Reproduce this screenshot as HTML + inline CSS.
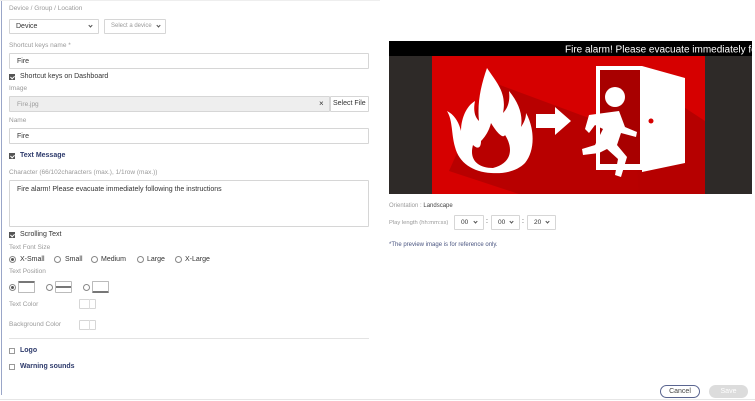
<!DOCTYPE html>
<html><head><meta charset="utf-8"><style>
*{box-sizing:border-box;margin:0;padding:0}
body{width:755px;height:401px;background:#fff;font-family:"Liberation Sans",sans-serif;font-size:7px;color:#333;position:relative;overflow:hidden}
.a{position:absolute;white-space:nowrap}
.lbl{color:#9a9a9a;font-size:6.5px}
.box{position:absolute;border:1px solid #d6d6d6;background:#fff;border-radius:1px}
.cb{position:absolute;width:6px;height:6px;background:#555;border:1px solid #555}
.cb:after{content:"";position:absolute;left:1px;top:0px;width:2px;height:3px;border:solid #fff;border-width:0 1px 1px 0;transform:rotate(45deg)}
.cbo{position:absolute;width:6px;height:6px;border:1px solid #999;background:#fff}
.rd{position:absolute;width:7px;height:7px;border:1px solid #888;border-radius:50%;background:#fff}
.rd.on:after{content:"";position:absolute;left:1px;top:1px;width:3px;height:3px;border-radius:50%;background:#555}
.bold{font-weight:bold;color:#2d3a6b}
.chev{position:absolute;width:3px;height:3px;border:solid #555;border-width:0 1px 1px 0;transform:rotate(45deg)}
</style></head><body>
<div style="position:absolute;left:1px;top:0;width:1px;height:395px;background:#9aa6c8"></div>
<div style="position:absolute;left:0;top:399px;width:755px;height:1px;background:#e6e6e6"></div>
<div style="position:absolute;left:0;top:0;width:380px;height:1px;background:#eee"></div>

<div class="a lbl" style="left:9px;top:5px">Device / Group / Location</div>
<div class="box" style="left:9px;top:19px;width:90px;height:15px"></div>
<div class="a" style="left:16px;top:23px">Device</div>
<div class="chev" style="left:89px;top:24px"></div>
<div class="box" style="left:104px;top:19px;width:62px;height:15px"></div>
<div class="a lbl" style="left:111px;top:23px;font-size:6px">Select a device</div>
<div class="chev" style="left:157px;top:24px"></div>

<div class="a lbl" style="left:9px;top:42px">Shortcut keys name *</div>
<div class="box" style="left:9px;top:53px;width:360px;height:16px"></div>
<div class="a" style="left:17px;top:58px">Fire</div>
<div class="cb" style="left:9px;top:74px"></div>
<div class="a" style="left:20px;top:73px">Shortcut keys on Dashboard</div>
<div class="a lbl" style="left:9px;top:85px">Image</div>
<div class="box" style="left:9px;top:96px;width:321px;height:16px;background:#eee"></div>
<div class="a lbl" style="left:17px;top:101px">Fire.jpg</div>
<div class="a" style="left:319px;top:99px;font-size:8px">×</div>
<div class="box" style="left:330px;top:96px;width:39px;height:16px"></div>
<div class="a" style="left:333px;top:100px;font-size:7px">Select File</div>
<div class="a lbl" style="left:9px;top:117px">Name</div>
<div class="box" style="left:9px;top:128px;width:360px;height:16px"></div>
<div class="a" style="left:17px;top:133px">Fire</div>
<div class="cb" style="left:9px;top:153px"></div>
<div class="a bold" style="left:20px;top:152px">Text Message</div>
<div class="a lbl" style="left:9px;top:169px">Character (66/102characters (max.), 1/1row (max.))</div>
<div class="box" style="left:9px;top:180px;width:360px;height:47px"></div>
<div class="a" style="left:17px;top:186px">Fire alarm! Please evacuate immediately following the instructions</div>
<div class="cb" style="left:9px;top:232px"></div>
<div class="a" style="left:20px;top:231px">Scrolling Text</div>
<div class="a lbl" style="left:9px;top:244px">Text Font Size</div>
<div class="rd on" style="left:9px;top:256px"></div><div class="a" style="left:20px;top:256px">X-Small</div>
<div class="rd" style="left:54px;top:256px"></div><div class="a" style="left:65px;top:256px">Small</div>
<div class="rd" style="left:91px;top:256px"></div><div class="a" style="left:101px;top:256px">Medium</div>
<div class="rd" style="left:137px;top:256px"></div><div class="a" style="left:147px;top:256px">Large</div>
<div class="rd" style="left:175px;top:256px"></div><div class="a" style="left:185px;top:256px">X-Large</div>
<div class="a lbl" style="left:9px;top:268px">Text Position</div>
<div class="rd on" style="left:9px;top:284px"></div>
<div class="box" style="left:18px;top:281px;width:17px;height:12px;border-color:#bbb;border-top:2px solid #777"></div>
<div class="rd" style="left:46px;top:284px"></div>
<div class="box" style="left:55px;top:281px;width:17px;height:12px;border-color:#bbb"><div style="position:absolute;left:0;right:0;top:4px;height:2px;background:#777"></div></div>
<div class="rd" style="left:83px;top:284px"></div>
<div class="box" style="left:92px;top:281px;width:17px;height:12px;border-color:#bbb;border-bottom:2px solid #777"></div>
<div class="a lbl" style="left:9px;top:301px">Text Color</div>
<div class="box" style="left:79px;top:299px;width:17px;height:10px"></div><div style="position:absolute;left:89px;top:299px;width:1px;height:10px;background:#ddd"></div>
<div class="a lbl" style="left:9px;top:321px">Background Color</div>
<div class="box" style="left:79px;top:320px;width:17px;height:10px"></div><div style="position:absolute;left:89px;top:320px;width:1px;height:10px;background:#ddd"></div>
<div style="position:absolute;left:9px;top:338px;width:360px;height:1px;background:#e3e3e3"></div>
<div class="cbo" style="left:9px;top:348px"></div><div class="a bold" style="left:20px;top:347px">Logo</div>
<div class="cbo" style="left:9px;top:364px"></div><div class="a bold" style="left:20px;top:363px">Warning sounds</div>

<svg style="position:absolute;left:389px;top:41px" width="363" height="153" viewBox="0 0 363 153">
<rect width="363" height="153" fill="#2e2a28"/>
<rect y="0" width="363" height="15" fill="#000"/>
<text x="176" y="11.5" fill="#fff" font-family="Liberation Sans" font-size="10">Fire alarm! Please evacuate immediately following the instructions</text>
<rect x="43" y="15" width="273" height="138" fill="#d60000"/>
<polygon points="100,40 316,120 316,153 130,153 60,130" fill="#b80000"/>
<polygon points="240,30 316,80 316,153 250,153" fill="#b60000"/>
<path d="M98,27 C108,42 118,52 114,72 C120,66 121,58 120,50 C130,62 134,74 132,86 C136,80 137,76 137,72 C146,88 146,110 136,122 C128,130 116,133 102,132 C84,131 70,122 66,106 C62,92 64,80 58,70 C66,74 70,82 72,90 C72,80 76,66 86,60 C84,70 86,76 90,80 C88,62 92,44 98,27 Z" fill="#fff"/>
<path d="M102,82 C108,92 114,98 116,94 C124,106 124,122 104,127 C88,127 80,118 84,104 C88,108 92,108 92,100 C96,96 100,90 102,82 Z" fill="#b80000"/>
<polygon points="147,73 166,73 166,66 182,80 166,94 166,87 147,87" fill="#fff"/>
<rect x="207" y="25" width="46" height="104" fill="#fff"/>
<rect x="211" y="29" width="40" height="94" fill="#a80000"/>
<polygon points="253,25 296,37 296,122 253,131" fill="#fff"/>
<circle cx="262" cy="80" r="2.5" fill="#d60000"/>
<circle cx="226" cy="56" r="10" fill="#fff"/>
<path d="M200,74 L230,70 L236,86 L248,91 L247,96 L232,92 L228,104 L238,116 L232,136 L226,134 L229,118 L218,108 L210,112 L194,114 L193,108 L206,104 L214,88 L206,84 L200,92 L196,88 Z" fill="#fff"/>
</svg>

<div class="a lbl" style="left:389px;top:203px;font-size:6px">Orientation : <span style="color:#444">Landscape</span></div>
<div class="a lbl" style="left:389px;top:220px;font-size:5.8px">Play length (hh:mm:ss)</div>
<div class="box" style="left:454px;top:215px;width:30px;height:15px"></div><div class="a" style="left:461px;top:219px;font-size:6.5px">00</div><div class="chev" style="left:474px;top:220px"></div>
<div class="a" style="left:486px;top:218px">:</div>
<div class="box" style="left:491px;top:215px;width:29px;height:15px"></div><div class="a" style="left:498px;top:219px;font-size:6.5px">00</div><div class="chev" style="left:510px;top:220px"></div>
<div class="a" style="left:522px;top:218px">:</div>
<div class="box" style="left:527px;top:215px;width:29px;height:15px"></div><div class="a" style="left:534px;top:219px;font-size:6.5px">20</div><div class="chev" style="left:546px;top:220px"></div>
<div class="a" style="left:389px;top:242px;font-size:6px;color:#4a5580">*The preview image is for reference only.</div>

<div style="position:absolute;left:660px;top:385px;width:40px;height:13px;border:1px solid #5a6590;border-radius:7px;text-align:center;line-height:11px;font-size:7px;color:#444">Cancel</div>
<div style="position:absolute;left:709px;top:385px;width:39px;height:13px;background:#dcdcdc;border-radius:7px;text-align:center;line-height:13px;font-size:7px;color:#fff">Save</div>
</body></html>
